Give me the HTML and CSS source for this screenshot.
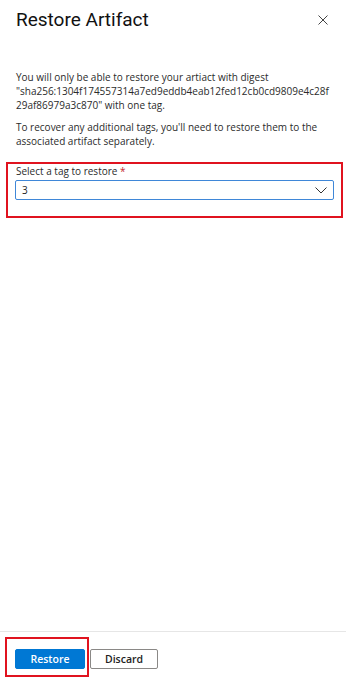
FILE: index.html
```html
<!DOCTYPE html>
<html>
<head>
<meta charset="utf-8">
<link rel="stylesheet" href="styles.css">
</head>
<body>
<div class="panel">
  <div class="header">
    <h1 class="title">Restore Artifact</h1>
    <button class="close" aria-label="Close">
      <svg width="10" height="10" viewBox="0 0 10 10"><path d="M0.5 0.5 L9.5 9.5 M9.5 0.5 L0.5 9.5" stroke="#444" stroke-width="1" fill="none"/></svg>
    </button>
  </div>
  <div class="content">
    <p class="para">You will only be able to restore your artiact with digest "sha256:1304f174557314a7ed9eddb4eab12fed12cb0cd9809e4c28f<br>29af86979a3c870" with one tag.</p>
    <p class="para second">To recover any additional tags, you'll need to restore them to the associated artifact separately.</p>
    <div class="highlight field">
      <label class="label">Select a tag to restore <span class="req">*</span></label>
      <div class="select">
        <span class="value">3</span>
        <svg class="chev" width="12" height="7" viewBox="0 0 12 7"><path d="M0.5 0.5 L6 6 L11.5 0.5" stroke="#333" stroke-width="1" fill="none"/></svg>
      </div>
    </div>
  </div>
  <div class="footer">
    <div class="highlight btnwrap">
      <button class="btn primary">Restore</button>
    </div>
    <button class="btn secondary">Discard</button>
  </div>
</div>
</body>
</html>
```
FILE: styles.css
```css
html, body {
  margin: 0;
  padding: 0;
  background: #fff;
}
.panel {
  width: 346px;
  height: 680px;
  display: flex;
  flex-direction: column;
  font-family: "Open Sans", "Noto Sans", sans-serif;
  color: #2b2b2b;
  font-size: 10px;
}
.header {
  display: flex;
  justify-content: space-between;
  align-items: flex-start;
  padding: 7px 18px 0 16px;
}
.title {
  margin: 0;
  font-family: Roboto, "Open Sans", sans-serif;
  font-size: 19px;
  line-height: 25px;
  font-weight: 400;
  color: #111;
}
.close {
  border: 0;
  background: none;
  padding: 0;
  margin-top: 8px;
  width: 10px;
  height: 10px;
  display: flex;
}
.content {
  flex: 1;
  padding: 38px 16px 0 16px;
}
.para {
  margin: 0;
  line-height: 14px;
}
.para.second {
  margin-top: 8px;
}
.highlight {
  border: 2px solid #e0131f;
}
.field {
  margin: 14px -13px 0 -10px;
  padding: 0 7px 16px 7px;
}
.label {
  display: block;
  padding-left: 1px;
  line-height: 14px;
}
.req {
  color: #c4262e;
}
.select {
  margin-top: 2px;
  height: 20px;
  box-sizing: border-box;
  border: 1px solid #3f87d8;
  border-radius: 2px;
  display: flex;
  align-items: center;
  justify-content: space-between;
  padding: 0 6px 0 6px;
}
.value {
  color: #222;
}
.footer {
  border-top: 1px solid #e6e6e6;
  display: flex;
  align-items: flex-start;
  padding: 5px 0 0 5px;
  height: 49px;
  box-sizing: border-box;
}
.btnwrap {
  padding: 10px 2px 6px 8px;
}
.btn {
  font-family: "Open Sans", "Noto Sans", sans-serif;
  font-size: 10.5px;
  font-weight: 600;
  height: 20px;
  border-radius: 2px;
  padding: 0;
  line-height: 18px;
}
.primary {
  width: 70px;
  background: #0078d4;
  color: #fff;
  border: 1px solid #0078d4;
}
.secondary {
  margin-top: 12px;
  margin-left: 1px;
  width: 68px;
  background: #fff;
  color: #222;
  border: 1px solid #8a8886;
}
```
